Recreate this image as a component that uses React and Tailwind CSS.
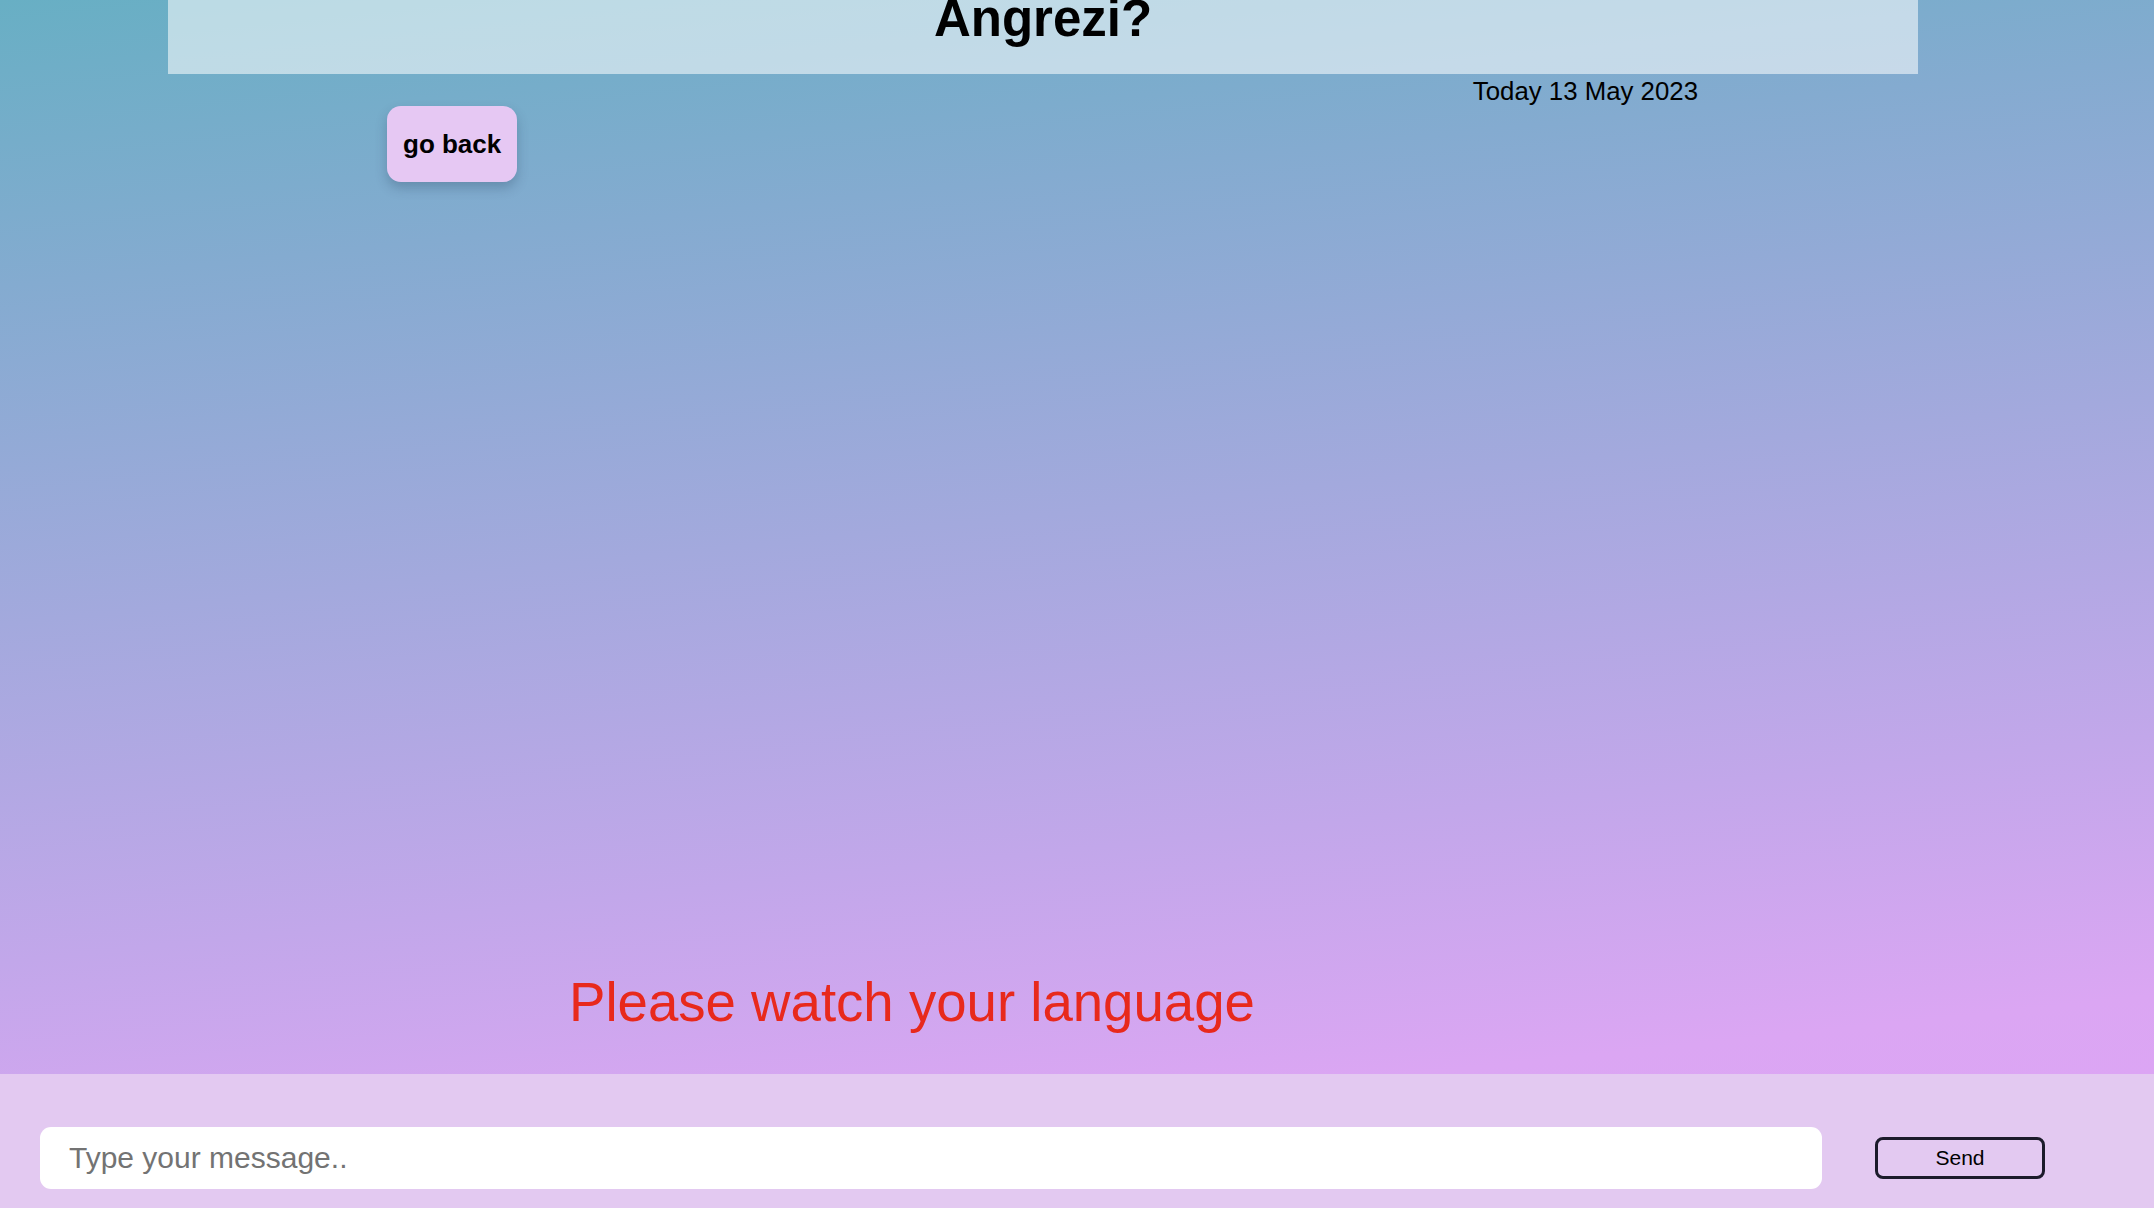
export default function App() {
  return (
    <div
      className="h-screen w-full flex flex-col overflow-hidden"
      style={{ fontFamily: '"Liberation Sans", Arial, sans-serif' }}
    >
      <main className="flex-1 flex flex-col bg-[linear-gradient(174deg,#68afc4_0%,#84abd0_22%,#a3a9dd_48%,#c2a7ea_74%,#dba6f3_94%,#dca5f4_100%)]">
        <header className="ml-[168px] w-[1750px] h-[74px] bg-white/55 flex justify-center overflow-hidden">
          <h1 className="mt-[-7px] text-[51px] leading-none font-bold text-black">Angrezi?</h1>
        </header>
        <div className="flex justify-end pr-[456px] pt-[3px]">
          <span className="text-[25.8px] leading-[29px] text-black">Today 13 May 2023</span>
        </div>
        <div className="pl-[387px]">
          <button className="h-[76px] px-[16px] rounded-[14px] bg-[#e6c8f3] text-[26px] font-bold text-black shadow-[0_6px_12px_rgba(40,60,90,0.28)]">
            go back
          </button>
        </div>
        <div className="flex-1" />
        <p className="pl-[569px] pb-[43px] text-[54.6px] leading-none text-[#e8291c]">
          Please watch your language
        </p>
      </main>
      <footer className="h-[134px] bg-[#e3c9f1] flex items-center pl-[40px] pt-[33px]">
        <input
          type="text"
          placeholder="Type your message.."
          className="w-[1782px] h-[62px] rounded-[11px] bg-white pl-[29px] text-[30px] text-black placeholder:text-[#737373] outline-none"
        />
        <button className="ml-[53px] w-[170px] h-[42px] rounded-[8px] border-[3px] border-[#1c1b2b] bg-[#e3c9f1] text-[21px] text-black leading-none">
          Send
        </button>
      </footer>
    </div>
  );
}
